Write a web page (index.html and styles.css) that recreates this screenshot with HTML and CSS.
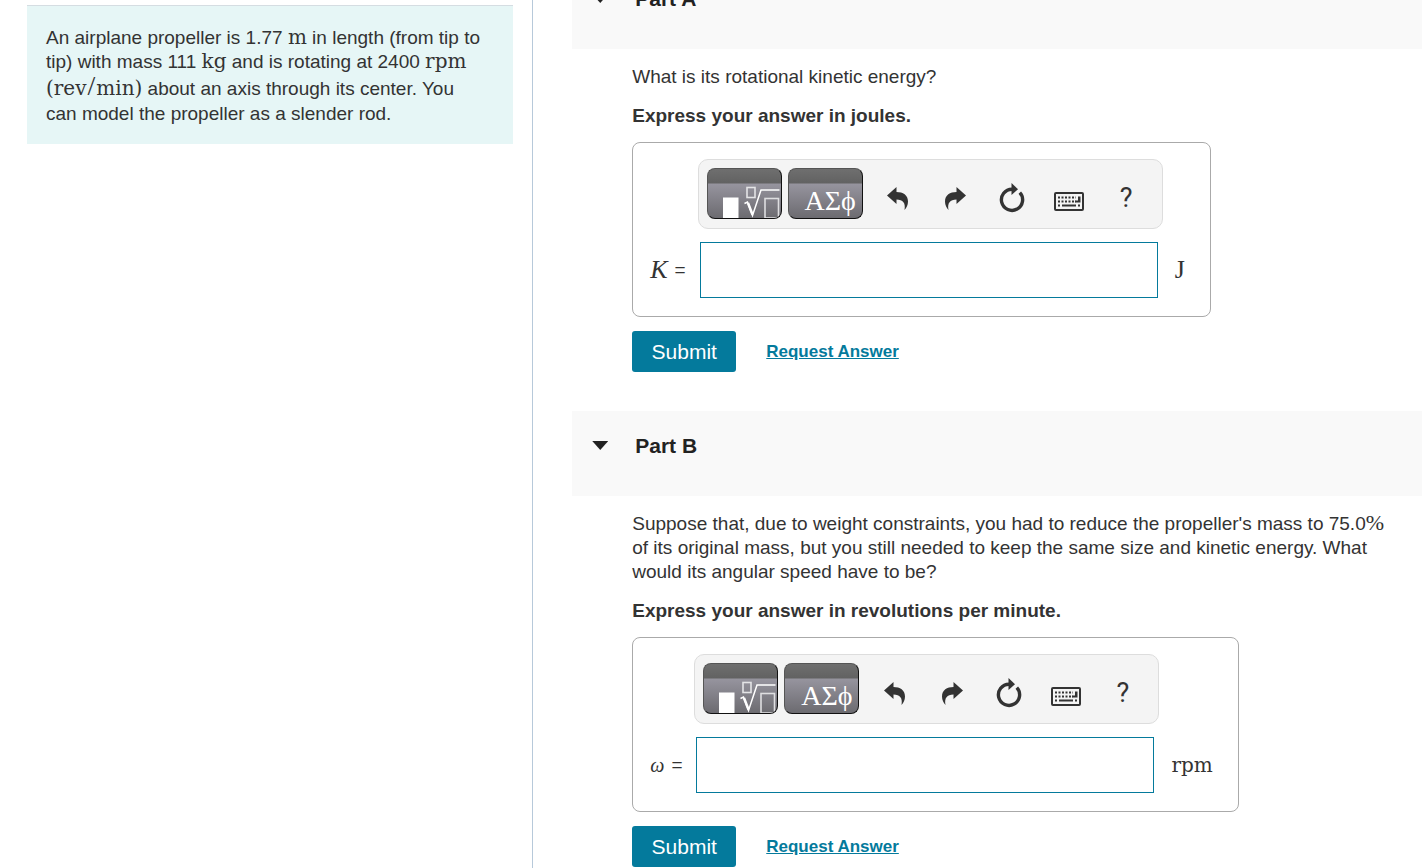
FILE: index.html
```html
<!DOCTYPE html>
<html lang="en">
<head>
<meta charset="utf-8">
<title>Rotational Kinetic Energy</title>
<link rel="stylesheet" href="styles.css">
</head>
<body>
<svg class="sprite" aria-hidden="true">
  <symbol id="root" viewBox="0 0 75 52">
    <rect x="15" y="28.500" width="15.500" height="22.500" fill="#fff"/>
    <g fill="none" stroke="#fff">
      <rect x="39" y="18.500" width="8" height="10" stroke-width="1.600" stroke="#e4e4e6"/>
      <path d="M36.500 34.500l3-1.500 5 13.500 8.500-25.500h18.500" stroke-width="1.500"/>
      <path d="M40 34l4.500 11.500" stroke-width="2.500"/>
      <rect x="57" y="29.500" width="13.500" height="19.500" stroke-width="1.600" stroke="#dedee0"/>
    </g>
  </symbol>
  <symbol id="undo" viewBox="0 0 22 24"><path d="M0 9.500L9.500 1v5C16 6 21 9 21 15.500c0 3.500-1.500 6.500-3.500 8.500C18.800 17 16 13.500 9.500 13.500V18z"/></symbol>
  <symbol id="redo" viewBox="0 0 22 24"><path d="M22 9.500L12.500 1v5C6 6 1 9 1 15.500c0 3.500 1.500 6.500 3.500 8.500C3.200 17 6 13.500 12.500 13.500V18z"/></symbol>
  <symbol id="reset" viewBox="0 0 26 30"><path d="M20.800 9.600A10.600 10.600 0 1 1 13 6.200" fill="none" stroke="currentColor" stroke-width="3.400"/><path d="M12.500 0L19 6.200 12.500 12z"/></symbol>
  <symbol id="keyboard" viewBox="0 0 30 19">
    <rect x="1" y="1" width="28" height="17" rx="1" fill="none" stroke="currentColor" stroke-width="2"/>
    <path d="M4 5.500h18M4 9.500h18M4 13.500h2.500M24 13.500h2.500" fill="none" stroke="currentColor" stroke-width="2" stroke-dasharray="2 1.500"/>
    <path d="M8 13.500h14" stroke="currentColor" stroke-width="2"/><path d="M24 4.500h2.500v6H21v-2h3z"/>
  </symbol>
</svg>
<div class="page">
  <aside class="problem-pane">
    <p class="problem">An airplane propeller is 1.77 <span class="math">m</span> in length (from tip to tip) with mass 111 <span class="math">kg</span> and is rotating at 2400 <span class="math">rpm</span> <span class="math tall">(rev<span class="slash">/</span>min)</span> about an axis through its center. You can model the propeller as a slender rod.</p>
  </aside>
  <main class="parts">
    <section class="part scrolled">
      <h2 class="part-header"><span class="caret"></span>Part A</h2>
      <div class="part-body">
        <p>What is its rotational kinetic energy?</p>
        <p class="instruction">Express your answer in joules.</p>
        <div class="answer">
          <div class="toolbar" role="toolbar" aria-label="Answer tools">
            <button class="template" type="button" aria-label="Templates"><svg><use href="#root"/></svg></button>
            <button class="template" type="button" aria-label="Symbols"><span class="greek">ΑΣϕ</span></button>
            <div class="tools">
              <button type="button" aria-label="Undo"><svg width="22" height="24"><use href="#undo"/></svg></button>
              <button type="button" aria-label="Redo"><svg width="22" height="24"><use href="#redo"/></svg></button>
              <button type="button" aria-label="Reset"><svg width="26" height="30"><use href="#reset"/></svg></button>
              <button type="button" aria-label="Keyboard shortcuts"><svg class="low" width="30" height="19"><use href="#keyboard"/></svg></button>
              <button type="button" aria-label="Help">?</button>
            </div>
          </div>
          <label class="variable" for="energy"><i>K</i> =</label>
          <input class="value" id="energy" type="text">
          <span class="unit letter">J</span>
        </div>
        <div class="actions">
          <button class="submit" type="button">Submit</button>
          <a class="request" href="#">Request Answer</a>
        </div>
      </div>
    </section>
    <section class="part">
      <h2 class="part-header"><span class="caret"></span>Part B</h2>
      <div class="part-body">
        <p>Suppose that, due to weight constraints, you had to reduce the propeller's mass to 75.0<span class="percent">%</span> of its original mass, but you still needed to keep the same size and kinetic energy. What would its angular speed have to be?</p>
        <p class="instruction">Express your answer in revolutions per minute.</p>
        <div class="answer">
          <div class="toolbar" role="toolbar" aria-label="Answer tools">
            <button class="template" type="button" aria-label="Templates"><svg><use href="#root"/></svg></button>
            <button class="template" type="button" aria-label="Symbols"><span class="greek">ΑΣϕ</span></button>
            <div class="tools">
              <button type="button" aria-label="Undo"><svg width="22" height="24"><use href="#undo"/></svg></button>
              <button type="button" aria-label="Redo"><svg width="22" height="24"><use href="#redo"/></svg></button>
              <button type="button" aria-label="Reset"><svg width="26" height="30"><use href="#reset"/></svg></button>
              <button type="button" aria-label="Keyboard shortcuts"><svg class="low" width="30" height="19"><use href="#keyboard"/></svg></button>
              <button type="button" aria-label="Help">?</button>
            </div>
          </div>
          <label class="variable" for="speed"><i class="small">ω</i> =</label>
          <input class="value" id="speed" type="text">
          <span class="unit">rpm</span>
        </div>
        <div class="actions">
          <button class="submit" type="button">Submit</button>
          <a class="request" href="#">Request Answer</a>
        </div>
      </div>
    </section>
  </main>
</div>
</body>
</html>
```
FILE: styles.css
```css
* { box-sizing: border-box; }

body {
  margin: 0;
  background: #fff;
  color: #333;
  font: 19px/24px "Liberation Sans", Arial, sans-serif;
}

p, h2 { margin: 0; }
button { font: inherit; color: inherit; cursor: pointer; }
.sprite { display: none; }

/* Two panes, each clipped to the window */
.page {
  display: grid;
  grid-template-columns: 3fr 5fr;
  height: 100vh;
  overflow: hidden;
}

.problem-pane {
  padding: 5px 19px 0 27px;
  border-right: 1px solid #b7c9da;
}

.problem {
  padding: 20px 30px 18px 19px;
  border-top: 1px solid #d5dde2;
  background: #e6f6f6;
}

.math, .unit { font-family: "DejaVu Serif", serif; }
.math { font-size: 20px; line-height: 20px; }
.tall { display: inline-block; line-height: 28px; }
.slash { margin: 0 1px; font-family: "Liberation Serif", serif; font-size: 28px; line-height: 20px; }

.percent { font: 22px/22px "Liberation Serif", serif; }

.parts { padding-left: 39px; overflow: hidden; }

/* The pane is scrolled part-way into the first header */
.scrolled { margin-top: -36px; }

.part-header {
  display: flex;
  align-items: flex-start;
  gap: 27px;
  height: 85px;
  padding: 23px 20px;
  background: #f9f9f9;
  color: #222;
  font-size: 21px;
}

.caret {
  width: 16px;
  height: 9px;
  margin-top: 7px;
  background: #222;
  clip-path: polygon(0 0, 100% 0, 50% 100%);
}

.part-body { padding: 16px 24px 39px 60px; }
.instruction { margin: 15px 0 14px; font-weight: bold; }

.answer {
  display: grid;
  grid-template-columns: auto 465px auto;
  gap: 13px 12px;
  align-items: center;
  width: max-content;
  padding: 16px 25px 18px 17px;
  border: 1px solid #aaa;
  border-radius: 8px;
}

.toolbar {
  grid-column: 2;
  display: flex;
  gap: 6px;
  height: 70px;
  padding: 8px;
  border: 1px solid #ddd;
  border-radius: 10px;
  background: #f4f4f4;
}

.template {
  flex: none;
  width: 75px;
  height: 51px;
  padding: 0;
  overflow: hidden;
  border: 1px solid #111;
  border-top-color: #555;
  border-left-color: #555;
  border-radius: 8px;
  background: linear-gradient(#6f6f6f, #626262 14px, #96949e 15px, #6c6b70);
  color: #fff;
}

.template svg { display: block; width: 75px; height: 52px; }

.greek {
  display: block;
  padding: 14px 6px 0 0;
  font: 28px/36px "Liberation Serif", serif;
  text-align: right;
}

.tools { display: flex; flex: 1; padding-left: 1px; }

.tools button {
  display: flex;
  flex: 0 0 57px;
  align-items: center;
  justify-content: center;
  height: 60px;
  padding: 0;
  border: 0;
  background: none;
  font: 27px/30px Roboto, sans-serif;
}

.tools svg { fill: currentColor; }
.low { margin-top: 6px; }

.variable {
  grid-column: 1;
  display: flex;
  align-items: center;
  gap: 7px;
}

.variable i { font: italic 26px/24px "Liberation Serif", serif; }
.variable .small { font-size: 20px; }
.unit { font-size: 20px; }
.letter { font-family: "Liberation Serif", serif; font-size: 26px; }

.value {
  width: 458px;
  height: 56px;
  margin-left: 2px;
  padding: 0 12px;
  border: 1px solid #047a9c;
  border-radius: 0;
  background: #fff;
  font: inherit;
}

.actions { display: flex; align-items: center; gap: 30px; margin-top: 14px; }

.submit {
  width: 104px;
  height: 41px;
  padding: 0;
  border: 0;
  border-radius: 3px;
  background: #047a9c;
  color: #fff;
  font-size: 21px;
}

.request { color: #047a9c; font-size: 17px; font-weight: bold; }
```
